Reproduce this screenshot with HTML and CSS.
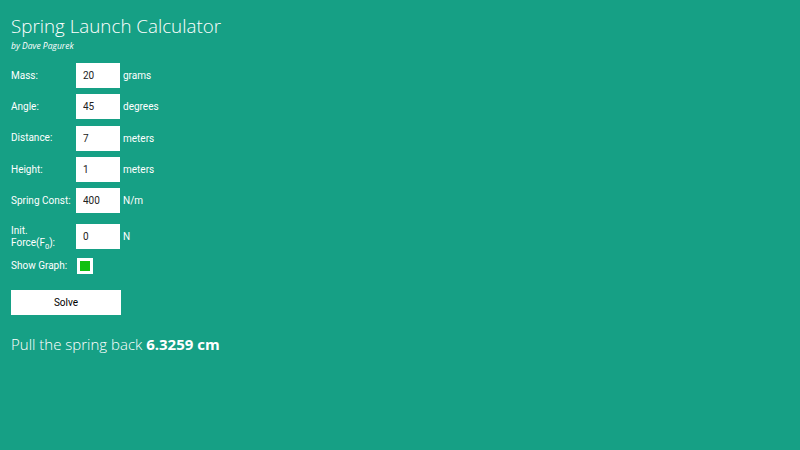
FILE: index.html
```html
<!DOCTYPE HTML>
<html>

<head>
  <title>Spring Launch Calculator</title>
  <meta name="viewport" content="width=device-width, initial-scale=1">
  <link rel="stylesheet" href="styles.css">
</head>

<body>
  <header>
    <h1>Spring Launch Calculator</h1>
    <p class="byline">by Dave Pagurek</p>
  </header>
  <form class="calc">
    <label for="mass">Mass:</label><input id="mass" type="text" value="20"><span>grams</span>
    <label for="angle">Angle:</label><input id="angle" type="text" value="45"><span>degrees</span>
    <label for="distance">Distance:</label><input id="distance" type="text" value="7"><span>meters</span>
    <label for="height">Height:</label><input id="height" type="text" value="1"><span>meters</span>
    <label for="k">Spring Const:</label><input id="k" type="text" value="400"><span>N/m</span>
    <label for="f0">Init.<br>Force(F<sub>0</sub>):</label><input id="f0" type="text" value="0"><span>N</span>
    <label for="graph">Show Graph:</label><label class="check" for="graph"><input id="graph" type="checkbox" checked></label><span></span>
  </form>
  <button class="solve" type="button">Solve</button>
  <p class="result">Pull the spring back <strong>6.3259 cm</strong></p>
</body>

</html>
```

FILE: styles.css
```css
body {
  margin: 0;
  padding: 14px 11px;
  background-color: #16a085;
  color: white;
  font-family: Roboto, "Liberation Sans", sans-serif;
  font-size: 10px;
}

h1 {
  font-family: "Open Sans", sans-serif;
  font-weight: 300;
  font-size: 18.8px;
  margin: 0;
  line-height: 24px;
}

.byline {
  font-family: "Open Sans", sans-serif;
  font-style: italic;
  font-size: 8.5px;
  margin: 2px 0 0;
}

/* one row per field: label, input, unit */
.calc {
  display: grid;
  grid-template-columns: 65px 44px auto;
  grid-template-rows: 31px 31.5px 31.5px 31px 31px 41px 18px;
  align-items: center;
  margin-top: 9px;
}

.calc label {
  color: white;
  line-height: 12px;
  white-space: nowrap;
}

.calc span {
  padding-left: 3px;
}

.calc input[type="text"] {
  box-sizing: border-box;
  width: 44px;
  height: 25px;
  border: none;
  padding: 0 7px;
  font-family: Roboto, "Liberation Sans", sans-serif;
  font-size: 10px;
  color: #222;
  background: white;
  outline: none;
}

.calc sub {
  font-size: 7.5px;
  line-height: 0;
}

.check {
  display: block;
  width: 16px;
  height: 16px;
  box-sizing: border-box;
  border: 3px solid white;
  background: #10c010;
  margin-left: 1px;
}

.check input {
  display: none;
}

.solve {
  display: block;
  margin-top: 15px;
  width: 110px;
  height: 25px;
  border: none;
  background: white;
  color: black;
  font-family: Roboto, "Liberation Sans", sans-serif;
  font-size: 10px;
}

.result {
  font-family: "Open Sans", sans-serif;
  font-weight: 300;
  font-size: 15px;
  margin: 19px 0 0;

  & strong {
    font-weight: 700;
  }
}
```
